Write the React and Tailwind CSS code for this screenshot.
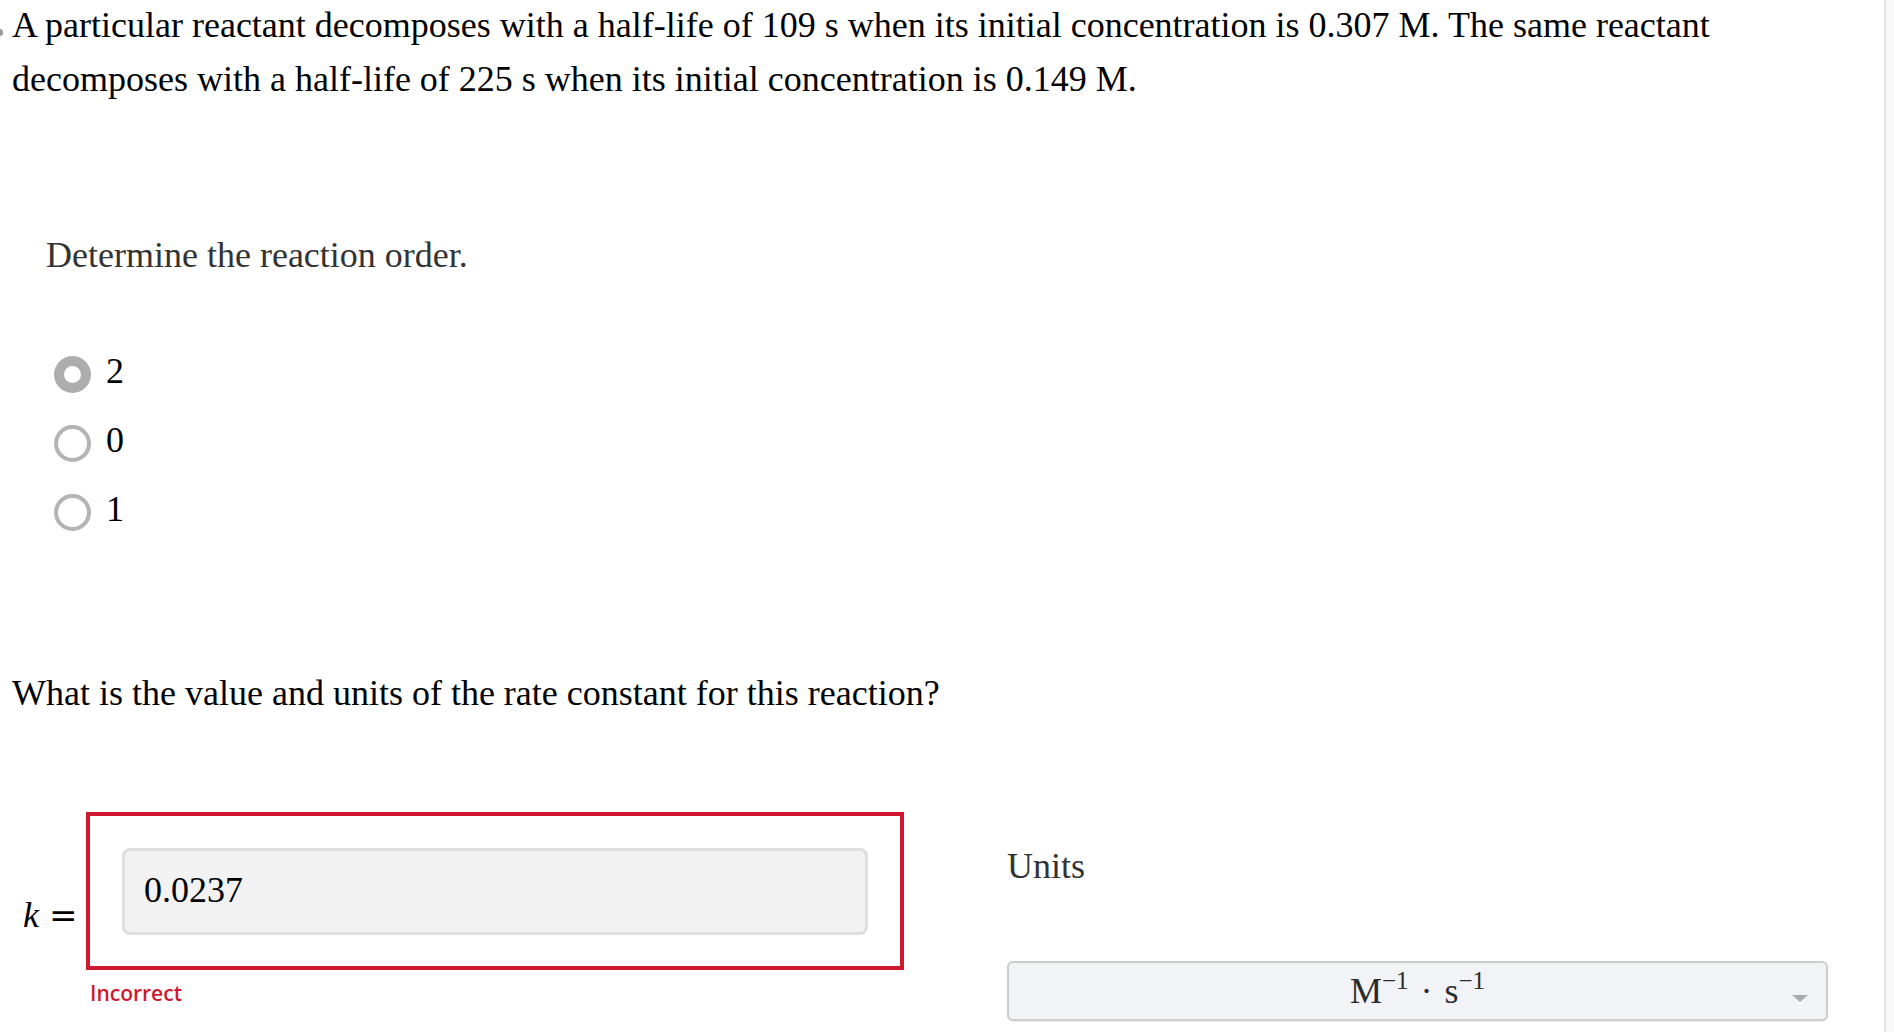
import React from "react";

function Radio({ checked, label }) {
  return (
    <div className="flex h-[54px] items-center gap-[15px] pl-[54px]">
      {checked ? (
        <div className="mt-[6px] flex h-[37px] w-[37px] items-center justify-center rounded-full bg-[#adadad]">
          <div className="h-[17px] w-[17px] rounded-full bg-white" />
        </div>
      ) : (
        <div className="mt-[6px] h-[37px] w-[37px] rounded-full border-[4px] border-[#b4b4b4] bg-white" />
      )}
      <span className="text-black">{label}</span>
    </div>
  );
}

export default function App() {
  return (
    <div className="flex h-[1032px] w-full overflow-hidden bg-white font-['Liberation_Serif','Times_New_Roman',serif] text-[36px] leading-[54px] text-black">
      <div className="relative min-w-0 flex-1">
        <div className="absolute left-0 top-[29px] h-[7px] w-[3px] rounded-r-full bg-[#9a9a9a]" />

        <p className="mt-[-2px] pl-[12px]">
          A particular reactant decomposes with a half-life of 109 s when its initial concentration is 0.307 M. The same reactant
          <br />
          decomposes with a half-life of 225 s when its initial concentration is 0.149 M.
        </p>

        <p className="mt-[122px] pl-[46px] text-[#333333]">Determine the reaction order.</p>

        <div className="mt-[62px] flex flex-col gap-[15px]">
          <Radio checked label="2" />
          <Radio label="0" />
          <Radio label="1" />
        </div>

        <p className="mt-[130px] pl-[12px]">What is the value and units of the rate constant for this reaction?</p>

        <div className="mt-[92px] flex items-start">
          <div className="mt-[76px] flex w-[86px] shrink-0 items-baseline pl-[23px]">
            <i className="italic">k</i>
            <span className="ml-[10px] font-['DejaVu_Serif',serif] text-[34px]">=</span>
          </div>

          <div className="flex shrink-0 flex-col">
            <div className="w-[818px] border-[4px] border-[#d0192e] px-[32px] pb-[31px] pt-[32px]">
              <div className="flex h-[87px] w-full items-center rounded-[8px] border-[3px] border-[#dedede] bg-[#f2f2f2] pl-[19px]">
                <span className="mt-[-3px] text-black">0.0237</span>
              </div>
            </div>
            <div className="mt-[9px] pl-[4px] font-['Open_Sans','Liberation_Sans',sans-serif] text-[21px] font-semibold leading-[28px] text-[#d0192e]">
              Incorrect
            </div>
          </div>

          <div className="ml-[103px] flex w-[821px] shrink-0 flex-col">
            <div className="mt-[27px] text-[#333333]">Units</div>
            <div className="relative mt-[68px] flex h-[60px] items-center justify-center rounded-[6px] border-2 border-[#cdcdcd] bg-[#f2f3f6] text-[#2b2b2b] shadow-[0_1px_1px_rgba(0,0,0,0.08)]">
              <span className="whitespace-nowrap">
                M<span className="align-[14px] text-[25px] leading-none">−1</span>
                <span className="ml-[12px]">·</span>
                <span className="ml-[12px]">s</span>
                <span className="align-[14px] text-[25px] leading-none">−1</span>
              </span>
              <div className="absolute right-[18px] top-[32px] h-0 w-0 border-l-[8px] border-r-[8px] border-t-[7px] border-l-transparent border-r-transparent border-t-[#ababab]" />
            </div>
          </div>
        </div>
      </div>
      <div className="w-[10px] shrink-0 border-l-2 border-[#e2e2e2] bg-[#f8f8f8]" />
    </div>
  );
}
